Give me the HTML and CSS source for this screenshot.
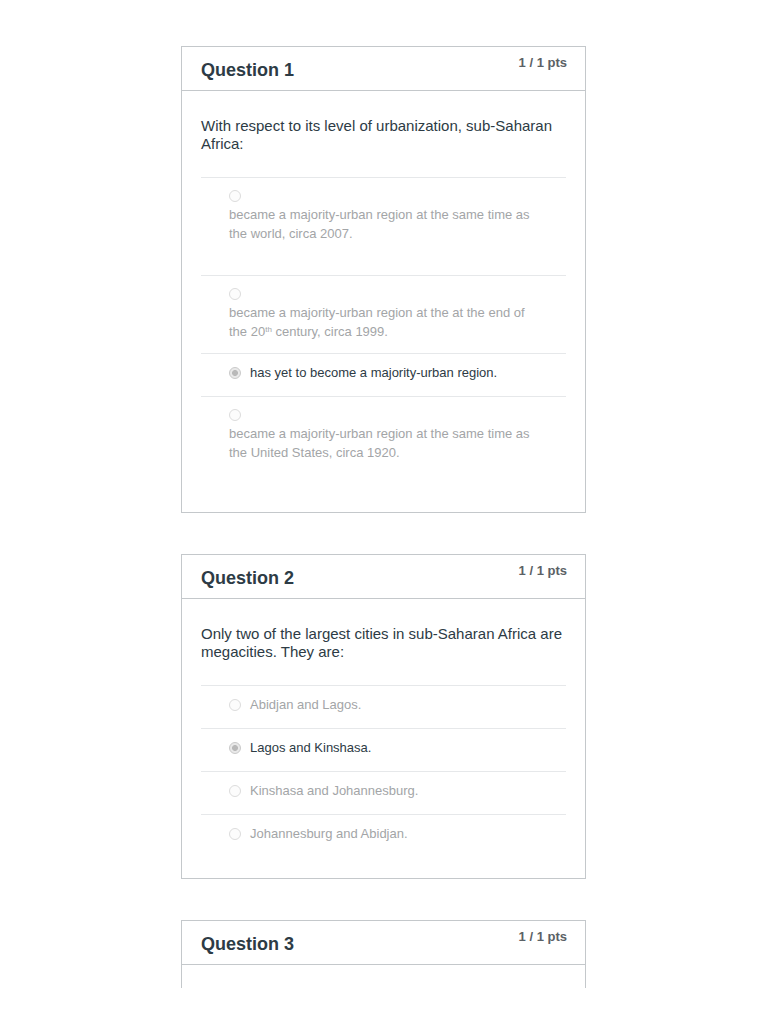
FILE: index.html
```html
<!DOCTYPE html>
<html lang="en">
<head>
<meta charset="utf-8">
<title>Quiz</title>
<link rel="stylesheet" href="styles.css">
</head>
<body>
<div class="page">
  <section class="card">
    <header class="card-head">
      <h2 class="q-title">Question 1</h2>
      <span class="q-pts">1 / 1 pts</span>
    </header>
    <div class="card-body">
      <p class="q-text">With respect to its level of urbanization, sub-Saharan Africa:</p>
      <ul class="answers">
        <li class="answer long spaced">
          <span class="radio-row"><span class="radio"></span></span>
          <span class="a-text">became a majority-urban region at the same time as the world, circa 2007.</span>
        </li>
        <li class="answer long">
          <span class="radio-row"><span class="radio"></span></span>
          <span class="a-text">became a majority-urban region at the at the end of the 20<sup>th</sup> century, circa 1999.</span>
        </li>
        <li class="answer short selected">
          <span class="radio checked"></span>
          <span class="a-text">has yet to become a majority-urban region.</span>
        </li>
        <li class="answer long spaced-last">
          <span class="radio-row"><span class="radio"></span></span>
          <span class="a-text">became a majority-urban region at the same time as the United States, circa 1920.</span>
        </li>
      </ul>
    </div>
  </section>

  <section class="card">
    <header class="card-head">
      <h2 class="q-title">Question 2</h2>
      <span class="q-pts">1 / 1 pts</span>
    </header>
    <div class="card-body">
      <p class="q-text">Only two of the largest cities in sub-Saharan Africa are megacities. They are:</p>
      <ul class="answers">
        <li class="answer short">
          <span class="radio"></span>
          <span class="a-text">Abidjan and Lagos.</span>
        </li>
        <li class="answer short selected">
          <span class="radio checked"></span>
          <span class="a-text">Lagos and Kinshasa.</span>
        </li>
        <li class="answer short">
          <span class="radio"></span>
          <span class="a-text">Kinshasa and Johannesburg.</span>
        </li>
        <li class="answer short">
          <span class="radio"></span>
          <span class="a-text">Johannesburg and Abidjan.</span>
        </li>
      </ul>
    </div>
  </section>

  <section class="card">
    <header class="card-head">
      <h2 class="q-title">Question 3</h2>
      <span class="q-pts">1 / 1 pts</span>
    </header>
    <div class="card-body">
      <p class="q-text">&nbsp;</p>
    </div>
  </section>
</div>
</body>
</html>
```

FILE: styles.css
```css
html, body {
  margin: 0;
  padding: 0;
  background: #ffffff;
}

body {
  font-family: "Liberation Sans", Arial, sans-serif;
  color: #2d3b45;
}

.page {
  box-sizing: border-box;
  height: 988px;
  overflow: hidden;
  padding: 46px 0 0 181px;
}

.card {
  box-sizing: border-box;
  width: 405px;
  border: 1px solid #c4c8cb;
  margin-bottom: 41px;
  background: #fff;
}

.card-head {
  box-sizing: border-box;
  height: 44px;
  border-bottom: 1px solid #c4c8cb;
  display: flex;
  justify-content: space-between;
  align-items: flex-start;
  padding: 8px 18px 0 19px;
}

.q-title {
  margin: 3px 0 0;
  font-size: 18px;
  line-height: 24px;
  font-weight: 700;
  color: #2d3b45;
}

.q-pts {
  font-size: 13px;
  line-height: 16px;
  font-weight: 700;
  color: #5b6166;
}

.card-body {
  padding: 26px 19px 21px;
}

.q-text {
  margin: 0 0 24px;
  font-size: 15px;
  line-height: 18px;
  color: #2d3b45;
}

.answers {
  list-style: none;
  margin: 0;
  padding: 0;
}

.answer {
  border-top: 1px solid #e6e8ea;
  padding-left: 28px;
  padding-right: 28px;
  font-size: 13px;
  line-height: 18px;
  color: #a3a5a7;
}

.answer.long {
  padding-top: 9px;
  padding-bottom: 12px;
}

.answer.long .radio-row {
  display: flex;
  align-items: center;
  height: 18px;
}

.answer.long .a-text {
  display: block;
  line-height: 19px;
}

.answer.spaced {
  padding-bottom: 32px;
}

.answer.spaced-last {
  padding-bottom: 29px;
}

.answer.short {
  display: flex;
  align-items: center;
  gap: 9px;
  padding-top: 10px;
  padding-bottom: 14px;
}

.answer.selected {
  color: #2d3b45;
}

.radio {
  box-sizing: border-box;
  flex: none;
  display: inline-block;
  width: 12px;
  height: 12px;
  border-radius: 50%;
  border: 1px solid #dcdcdc;
  background: #fcfcfc;
}

.radio.checked {
  border-color: #c9c9c9;
  background: radial-gradient(circle, #b9b9b9 0 2.6px, #e9e9e9 3.3px);
}

sup {
  font-size: 8px;
  line-height: 0;
  vertical-align: 4px;
}
```
